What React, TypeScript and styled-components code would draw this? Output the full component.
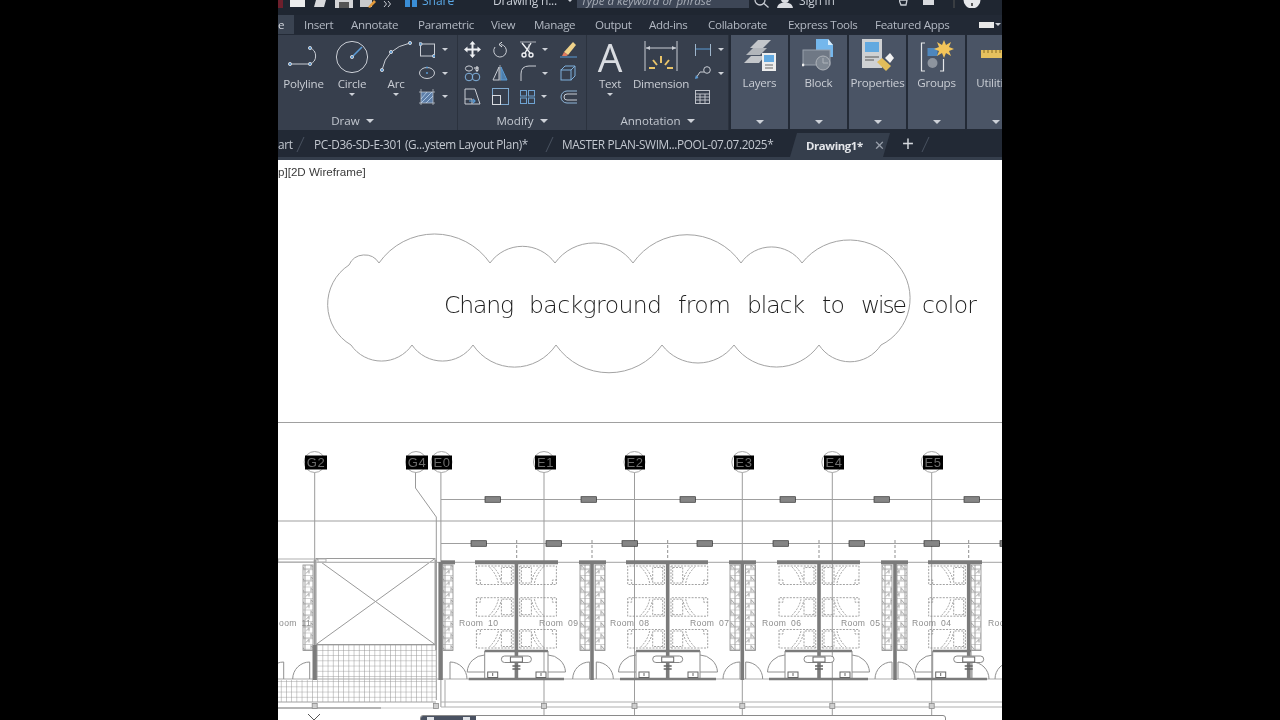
import React from "react";
import styled, { createGlobalStyle } from "styled-components";

const Global = createGlobalStyle`
  html, body { margin: 0; height: 100%; background: #000; overflow: hidden; }
  #root { height: 100%; }
`;

const Page = styled.div`
  height: 100%;
  display: flex;
  justify-content: center;
  background: #000;
  font-family: "Open Sans", "Liberation Sans", sans-serif;
`;
const Win = styled.div`
  width: 724px;
  height: 720px;
  flex: none;
  display: flex;
  flex-direction: column;
  overflow: hidden;
  filter: blur(0.35px);
`;
const TopBar = styled.div`
  height: 15px;
  flex: none;
  background: #1f2631;
  overflow: hidden;
`;
const TopRow = styled.div`
  height: 15px;
  margin-top: -7px;
  display: flex;
  align-items: center;
  font-size: 12px;
  color: #c9ced6;
  white-space: nowrap;
  & > * { flex: none; }
`;
const ShareText = styled.span`
  color: #5aa8e6;
  width: 71px;
`;
const DocName = styled.span`
  width: 74px;
  letter-spacing: -0.2px;
`;
const SignIn = styled.span`
  width: 34px;
  letter-spacing: -0.2px;
`;
const SearchBox = styled.div`
  width: 172px;
  height: 15px;
  padding-left: 4px;
  box-sizing: border-box;
  background: #3d4656;
  color: #a7adb7;
  font-style: italic;
  font-size: 11.5px;
  line-height: 15px;
`;
const Spacer = styled.span<{ $w: number }>`
  flex: none;
  width: ${(p) => p.$w}px;
`;
const TabRow = styled.div`
  height: 19px;
  flex: none;
  display: flex;
  align-items: center;
  background: #222935;
  font-size: 11.6px;
  letter-spacing: -0.32px;
  color: #b3b9c3;
  white-space: nowrap;
  & > * { flex: none; }
`;
const ActiveTab = styled.div`
  width: 16px;
  height: 19px;
  line-height: 19px;
  background: #3a4351;
  color: #d5d8de;
  margin-right: 10px;
`;
const Tab = styled.span<{ $w: number }>`
  width: ${(p) => p.$w}px;
`;
const WorkspaceButton = styled.span`
  margin-left: 3px;
  width: 15px;
  height: 6px;
  background: #e8e8e8;
`;
const Ribbon = styled.div`
  height: 96px;
  flex: none;
  display: flex;
  gap: 2px;
  padding-top: 1px;
  box-sizing: border-box;
  background: #232a36;
`;
const Panel = styled.div<{ $w: number }>`
  width: ${(p) => p.$w}px;
  flex: none;
  display: flex;
  flex-direction: column;
  background: #373f4d;
  border-right: 1px solid #2b323e;
  box-sizing: border-box;
  margin-right: -2px;
  &:nth-child(3) { margin-right: 0; }
`;
const PanelBody = styled.div`
  height: 76px;
  display: flex;
`;
const PanelTitle = styled.div<{ $shift?: number }>`
  flex: 1;
  display: flex;
  align-items: center;
  justify-content: center;
  gap: 6px;
  padding-right: ${(p) => p.$shift ?? 0}px;
  font-size: 11.6px;
  color: #c3c8d0;
`;
const TitleCaret = styled.span`
  flex: none;
  width: 0;
  height: 0;
  border-left: 4.5px solid transparent;
  border-right: 4.5px solid transparent;
  border-top: 4px solid #cdd1d8;
`;
const LargeTool = styled.div<{ $w: number }>`
  width: ${(p) => p.$w}px;
  flex: none;
  display: flex;
  flex-direction: column;
  align-items: center;
  padding-top: 4px;
  font-size: 11.6px;
  color: #c9cdd4;
  white-space: nowrap;
`;
const ToolIcon = styled.div`
  height: 35px;
  display: flex;
  align-items: center;
  justify-content: center;
`;
const ToolLabel = styled.div`
  line-height: 16px;
  margin-top: 1.5px;
  letter-spacing: -0.22px;
`;
const Caret = styled.span`
  flex: none;
  width: 0;
  height: 0;
  border-left: 3.5px solid transparent;
  border-right: 3.5px solid transparent;
  border-top: 3.5px solid #cdd1d8;
`;
const ToolCaret = styled(Caret)`
  margin-top: 1.5px;
`;
const SmallColumn = styled.div<{ $pad: number }>`
  display: flex;
  flex-direction: column;
  padding: 3px 0 0 ${(p) => p.$pad}px;
`;
const SmallTool = styled.div`
  height: 23.5px;
  display: flex;
  align-items: center;
  gap: 7px;
`;
const ModifyGrid = styled.div`
  display: grid;
  grid-template-columns: 28px 28px 40px 28px;
  grid-auto-rows: 23.5px;
  padding-top: 3px;
  align-items: center;
  justify-items: center;
`;
const LeftCell = styled.div`
  justify-self: start;
  padding-left: 6px;
  display: flex;
  align-items: center;
  gap: 6px;
`;
const BigA = styled.div`
  font-size: 39px;
  line-height: 35px;
  height: 35px;
  color: #d9dce1;
`;
const Collapsed = styled.div`
  width: 57px;
  flex: none;
  height: 94px;
  background: #4a5465;
  display: flex;
  flex-direction: column;
  align-items: center;
  padding-top: 3px;
  box-sizing: border-box;
  font-size: 11.6px;
  color: #c9cdd4;
  white-space: nowrap;
`;
const CollapsedCaret = styled(Caret)`
  margin-top: auto;
  margin-bottom: 5px;
  border-left-width: 4.5px;
  border-right-width: 4.5px;
  border-top-width: 4px;
`;
const DocTabs = styled.div`
  height: 30px;
  flex: none;
  display: flex;
  align-items: flex-start;
  background: #222935;
  border-bottom: 3px solid #353e4c;
  box-sizing: border-box;
  font-size: 11.8px;
  letter-spacing: -0.36px;
  color: #c3c8d0;
  white-space: nowrap;
`;
const DocTab = styled.div<{ $w: number }>`
  width: ${(p) => p.$w}px;
  flex: none;
  height: 26px;
  line-height: 29px;
`;
const Slash = styled.span<{ $left: number; $right: number }>`
  flex: none;
  width: 1px;
  height: 15px;
  margin: 7px ${(p) => p.$right}px 0 ${(p) => p.$left}px;
  background: #4a5361;
  transform: skewX(-25deg);
`;
const ActiveDoc = styled.div`
  width: 100px;
  height: 24px;
  margin: 3px 0 0 19px;
  flex: none;
  display: flex;
  align-items: center;
  gap: 11px;
  padding-left: 16px;
  box-sizing: border-box;
  background: #353e4c;
  clip-path: polygon(7px 0, 100% 0, 93px 100%, 0 100%);
  color: #e4e6ea;
  font-weight: 700;
  font-size: 11.4px;
  letter-spacing: -0.4px;
`;
const CloseMark = styled.span`
  color: #9aa1ac;
  font-weight: 400;
  font-size: 13px;
`;
const PlusMark = styled.span`
  flex: none;
  margin: 0 0 0 12px;
  font-size: 21px;
  line-height: 27px;
  color: #d5d8de;
`;
const Viewport = styled.div`
  position: relative;
  flex: 1;
  background: #fff;
  overflow: hidden;
`;
const ViewLabel = styled.div`
  position: absolute;
  left: 0;
  top: 4px;
  font-family: "Liberation Sans", sans-serif;
  font-size: 11.6px;
  line-height: 16px;
  color: #3a3a3a;
`;
const DrawingSvg = styled.svg`
  display: block;
  width: 724px;
  height: 560px;
`;
const CommandBar = styled.div`
  position: absolute;
  left: 142px;
  width: 526px;
  bottom: -2px;
  height: 7px;
  display: flex;
  border: 1px solid #8a8a8a;
  border-radius: 3px 3px 0 0;
  background: #fff;
  box-sizing: border-box;
  overflow: hidden;
`;
const CommandHead = styled.div`
  width: 55px;
  background: #4a5262;
  display: flex;
  justify-content: space-between;
  padding: 1px 6px;
  box-sizing: border-box;
`;
const CommandGlyph = styled.span`
  width: 7px;
  height: 3px;
  background: #e0e3e8;
`;

const GREY = "#c9cdd4";
const BLUE = "#5a9bd5";
const Dot = ({ x, y }: { x: number; y: number }) => <circle cx={x} cy={y} r={1.6} fill={BLUE} />;

const Polyline = () => (
  <svg width="40" height="34" fill="none" stroke={GREY} strokeWidth="1">
    <path d="M6 24H26M26 24A8.5 8.5 0 0 0 26 8" />
    <Dot x={6} y={24} /><Dot x={26} y={24} /><Dot x={26} y={8} />
  </svg>
);
const CircleIcon = () => (
  <svg width="34" height="34" fill="none" stroke={GREY} strokeWidth="1">
    <circle cx="17" cy="17" r="15.6" />
    <path d="M17 17L27 7" stroke={BLUE} strokeWidth="1.6" />
    <Dot x={17} y={17} />
  </svg>
);
const ArcIcon = () => (
  <svg width="32" height="34" fill="none" stroke={GREY} strokeWidth="1">
    <path d="M2 30Q6 8 30 3" />
    <Dot x={2} y={30} /><Dot x={11} y={12} /><Dot x={30} y={3} />
  </svg>
);
const RectIcon = () => (
  <svg width="16" height="16" fill="none" stroke={GREY} strokeWidth="1">
    <rect x="1.5" y="2" width="14" height="12" />
    <Dot x={1.5} y={2} /><Dot x={15} y={14} />
  </svg>
);
const EllipseIcon = () => (
  <svg width="16" height="16" fill="none" stroke={GREY} strokeWidth="1">
    <ellipse cx="8" cy="8" rx="7.5" ry="5.5" />
    <circle cx="8" cy="8" r="1" fill={BLUE} stroke="none" />
    <circle cx="8" cy="2.5" r="1" fill={BLUE} stroke="none" />
  </svg>
);
const HatchIcon = () => (
  <svg width="16" height="16" fill="none">
    <rect x="2" y="3" width="12" height="11" fill="#5d7ea8" />
    <path d="M2 10L8 3M2 14L13 3M7 14L14 7" stroke="#aac4e0" strokeWidth="1" />
    <path d="M2 0V16M14 0V16M0 3H16M0 14H16" stroke={GREY} strokeWidth=".7" />
  </svg>
);
const MoveIcon = () => (
  <svg width="17" height="17" fill="#eef0f3">
    <path d="M8.5 0L11.5 3.5H9.5V7.5H13.5V5.5L17 8.5L13.5 11.5V9.5H9.5V13.5H11.5L8.5 17L5.5 13.5H7.5V9.5H3.5V11.5L0 8.5L3.5 5.5V7.5H7.5V3.5H5.5Z" />
  </svg>
);
const RotateIcon = () => (
  <svg width="16" height="16" fill="none" stroke={GREY} strokeWidth="1">
    <path d="M9 2.5A6.3 6.3 0 1 1 3 5" />
    <path d="M10 0L7 2.5L10 5" stroke="#eef0f3" />
  </svg>
);
const TrimIcon = () => (
  <svg width="16" height="17" fill="none" stroke="#eef0f3" strokeWidth="1.4">
    <path d="M0 1H16" stroke={GREY} strokeWidth=".8" />
    <path d="M2 2L10 12M11 2L5 12" />
    <circle cx="4" cy="14" r="2" />
    <circle cx="11" cy="14" r="2" />
    <path d="M9 3V9" stroke={GREY} strokeWidth=".8" />
  </svg>
);
const EraseIcon = () => (
  <svg width="17" height="17" fill="none">
    <path d="M4 11L13 1L16 4L8 14Z" fill="#f0d38a" />
    <path d="M4 11L8 14L6.5 15H2Z" fill="#e07a5f" />
    <path d="M0 16H17" stroke={BLUE} strokeWidth="1" />
  </svg>
);
const CopyIcon = () => (
  <svg width="17" height="17" fill="none" stroke={GREY} strokeWidth="1">
    <ellipse cx="5" cy="3.5" rx="3.6" ry="2.6" />
    <circle cx="5" cy="12" r="3.8" stroke="#7fb0dc" />
    <circle cx="12" cy="12" r="3.8" stroke="#7fb0dc" />
    <path d="M10 3H15M13 1V6M11.5 4.5L13 6.5L14.5 4.5" stroke="#eef0f3" />
  </svg>
);
const MirrorIcon = () => (
  <svg width="16" height="16" fill="none" stroke={GREY} strokeWidth="1">
    <path d="M7 2L1 15H7Z" />
    <path d="M9 2L15 15H9Z" stroke={BLUE} fill="#4f7fab" />
    <path d="M8 0V16" strokeWidth=".7" />
  </svg>
);
const FilletIcon = () => (
  <svg width="16" height="16" fill="none" stroke={GREY} strokeWidth="1">
    <path d="M1 16V9Q1 1 9 1H16" />
  </svg>
);
const BoxIcon = () => (
  <svg width="16" height="16" fill="none" stroke="#7fb0dc" strokeWidth="1">
    <rect x="1" y="5" width="10" height="10" />
    <path d="M1 5L5 1H15V11L11 15M11 5L15 1" />
  </svg>
);
const StretchIcon = () => (
  <svg width="17" height="17" fill="none" stroke={GREY} strokeWidth="1">
    <path d="M1 1H11L16 16H1Z" />
    <path d="M1 11H8V16" />
    <path d="M5 13H11M9 11L11 13L9 15" stroke={BLUE} strokeWidth="1.2" />
  </svg>
);
const ScaleIcon = () => (
  <svg width="17" height="17" fill="none" strokeWidth="1">
    <rect x=".5" y=".5" width="16" height="16" stroke="#7fa9cf" />
    <rect x=".5" y="7.5" width="8" height="9" stroke="#d9dce1" />
  </svg>
);
const ArrayIcon = () => (
  <svg width="15" height="14" fill="none" stroke="#6fa3d2" strokeWidth="1">
    <rect x=".5" y=".5" width="6" height="5.5" />
    <rect x="8.5" y=".5" width="6" height="5.5" />
    <rect x=".5" y="8" width="6" height="5.5" />
    <rect x="8.5" y="8" width="6" height="5.5" />
  </svg>
);
const OffsetIcon = () => (
  <svg width="17" height="14" fill="none" stroke="#8fb6d9" strokeWidth="1">
    <path d="M17 1H7A6 6 0 0 0 7 13H17" />
    <path d="M17 4H7A3 3 0 0 0 7 10H17" stroke={GREY} />
  </svg>
);
const DimensionIcon = () => (
  <svg width="34" height="32" fill="none">
    <path d="M1 0V30M33 0V30" stroke={GREY} />
    <path d="M2 7H32" stroke={GREY} />
    <path d="M2 7L6 5V9ZM32 7L28 5V9Z" fill={GREY} />
    <path d="M17 15V22M9 19L13 24M25 19L21 24M5 27H11M23 27H29" stroke="#e9c46a" strokeWidth="2" />
  </svg>
);
const LinearIcon = () => (
  <svg width="16" height="16" fill="none" stroke="#9fb6cc" strokeWidth="1">
    <path d="M.5 2V14M15.5 2V14" />
    <path d="M1 7H15" stroke={BLUE} />
  </svg>
);
const LeaderIcon = () => (
  <svg width="16" height="14" fill="none" stroke={GREY} strokeWidth="1">
    <circle cx="12" cy="4" r="3.3" />
    <path d="M9 6L5 6L1 12" />
    <path d="M0 13L1 9L3.5 12Z" fill={BLUE} stroke="none" />
  </svg>
);
const TableIcon = () => (
  <svg width="15" height="14" fill="none" stroke={GREY} strokeWidth=".9">
    <rect x=".5" y=".5" width="14" height="13" />
    <path d="M.5 4H14.5M.5 7H14.5M.5 10H14.5M5 4V13.5M10 4V13.5" />
  </svg>
);
const LayersIcon = () => (
  <svg width="34" height="33" fill="none">
    <path d="M15 1H28L20 9H7Z" fill="#c3c6ca" />
    <path d="M3 16L10 9H24L17 16Z" fill="#b2b6bb" />
    <path d="M1 24L8 17H22L16 24Z" fill="#c3c6ca" />
    <rect x="19" y="14" width="14" height="18" fill="#eceded" />
    <rect x="21" y="16" width="10" height="7" fill="#62a9e0" />
    <path d="M22 26H30M22 29H30" stroke="#666" />
  </svg>
);
const BlockIcon = () => (
  <svg width="34" height="33" fill="none">
    <path d="M14 0H26L31 6V18H14Z" fill="#74b7ec" />
    <path d="M26 0L31 6H26Z" fill="#d7ecfb" />
    <rect x="1" y="11" width="27" height="15" fill="#6f7885" stroke="#98a0ab" />
    <circle cx="21" cy="24" r="7" fill="#7f8893" stroke="#aeb3ba" />
    <path d="M21 24V19M21 24H26" stroke="#aeb3ba" />
    <circle cx="1" cy="26" r="1.4" fill="#eee" />
  </svg>
);
const PropertiesIcon = () => (
  <svg width="34" height="33" fill="none">
    <rect x="1" y="0" width="20" height="29" fill="#cfd1d3" />
    <rect x="4" y="3" width="14" height="10" fill="#62a9e0" />
    <path d="M4 18H18M4 21H13" stroke="#555" />
    <path d="M16 23L25 32L30 27L21 19Z" fill="#e2bd5a" />
    <path d="M24 19L29 14L33 19L29 24Z" fill="#f2f2f2" />
  </svg>
);
const GroupsIcon = () => (
  <svg width="34" height="33" fill="none">
    <path d="M5 4H1.5V32H5M20 32H23.5V20" stroke="#e5e7ea" strokeWidth="1.2" />
    <rect x="7.5" y="9" width="10" height="8" fill="#4f87bd" />
    <circle cx="12.5" cy="24" r="5" fill="#8d949e" />
    <path d="M24 1L26 6L31 3L29 8L34 10L29 12L31 17L26 14L24 19L22 14L17 17L19 12L14 10L19 8L17 3L22 6Z" fill="#f4c55a" />
  </svg>
);
const UtilitiesIcon = () => (
  <svg width="36" height="33" fill="none">
    <rect x="3" y="11" width="33" height="8" fill="#e6c15e" />
    <path d="M6 11V14M10 11V14M14 11V14M18 11V14M22 11V14M26 11V14M30 11V14" stroke="#8a6f25" />
  </svg>
);
const QuickIcons = () => (
  <svg width="144" height="15" fill="none">
    <rect x="0" y="0" width="5" height="15" fill="#6d1f2c" />
    <rect x="12" y="0" width="15" height="14" fill="#eceded" />
    <path d="M36 14H46L50 0H40Z" fill="#d9dadc" />
    <rect x="57" y="0" width="18" height="15" fill="#d4d5d7" />
    <rect x="61" y="9" width="10" height="6" fill="#555" />
    <rect x="82" y="0" width="12" height="14" fill="#c9cacc" />
    <path d="M90 14L96 7L98 9L92 15Z" fill="#e59b3a" />
    <path d="M106 8L108.5 11L106 14M110 8L112.5 11L110 14" stroke="#c9cdd4" />
    <path d="M127 7H132V14H127ZM134 7H139V14H134Z" fill="#3a8ed6" />
  </svg>
);
const TopRightIcons = () => (
  <svg width="102" height="15" fill="none" stroke="#c9cdd4" strokeWidth="1.3">
    <path d="M0 7H8L7 12H2Z" />
    <rect x="24" y="7" width="11" height="5" fill="#d8dade" stroke="none" />
    <path d="M55 0V15" stroke="#555" strokeWidth="1" />
    <circle cx="73" cy="7" r="8.5" fill="#e6e7ea" stroke="none" />
    <path d="M73 10V13" stroke="#333" strokeWidth="1.6" />
  </svg>
);
const Magnifier = () => (
  <svg width="16" height="15" fill="none" stroke="#c9cdd4" strokeWidth="1.3">
    <circle cx="6" cy="7" r="5" />
    <path d="M10 10.5L14.5 14.5" />
  </svg>
);
const UserIcon = () => (
  <svg width="16" height="15" fill="#d9dbe0">
    <circle cx="8" cy="6" r="4" />
    <path d="M0 15C1 10 5 9.5 8 9.5C11 9.5 15 10 16 15Z" />
  </svg>
);

/* ---------- drawing data ---------- */
const LINE = "#9a9a9a";
const WALL = "#7b7b7b";

const cloudPath =
  "M379 263A67.6 67.6 0 0 1 490 263A40 40 0 0 1 555 263A48 48 0 0 1 633 263A65.7 65.7 0 0 1 741 263A37 37 0 0 1 802 263A60 60 0 0 1 898 265A52 52 0 0 1 881 345A37 37 0 0 1 819 345A52 52 0 0 1 734 345A45 45 0 0 1 662 345A64.5 64.5 0 0 1 556 345A50 50 0 0 1 473 345A37 37 0 0 1 412 345A37 37 0 0 1 351 345A47 47 0 0 1 349 265A17 17 0 0 1 379 263Z";

const words: [string, number, number][] = [
  ["Chang", 444, 70],
  ["background", 529, 133],
  ["from", 678, 53],
  ["black", 747, 58],
  ["to", 822, 23],
  ["wise", 861, 46],
  ["color", 922, 55],
];
const bubbles: [string, number, number, number][] = [
  ["G2", 314.7, 305, 22],
  ["G4", 416, 406, 22],
  ["E0", 441.5, 432, 20],
  ["E1", 544, 535, 21],
  ["E2", 634.5, 625, 20],
  ["E3", 742.3, 734, 20],
  ["E4", 832.3, 824, 20],
  ["E5", 931.7, 923, 20],
];
const upperMarks = [485, 581, 680, 780, 874, 964];
const lowerMarks = [471, 546, 622, 697, 773, 849, 924, 1000];
const ticks = [516.7, 592, 667.7, 819, 895, 968.7];
const wallSegs: [number, number][] = [
  [441, 455], [475, 558], [579, 606], [626, 708], [729, 756], [777, 860], [881, 908], [928, 982],
];
const partitions = [516.4, 592, 667.7, 742.3, 819, 895, 968.7];
const strips = [303, 443, 580, 595, 730, 745.5, 882, 897, 971];
const labels: [string, number][] = [
  ["oom 11", 279], ["Room 10", 459], ["Room 09", 539], ["Room 08", 610], ["Room 07", 690],
  ["Room 06", 762], ["Room 05", 841], ["Room 04", 912], ["Roo", 988],
];
const doors: [number, number][] = [
  [309.7, -1], [283.7, -1], [450, 1], [589.7, -1], [596.3, 1], [740, -1], [745.7, 1],
  [892, -1], [898, 1], [972, 1], [1012, -1],
];
const baths: [number, number, number, boolean][] = [
  [484.7, 548, 516.4, true],
  [636, 700, 667.7, true],
  [785, 852, 819, true],
  [932.7, 971, 968.7, false],
];
const squares = [314.7, 436, 544, 634.5, 742.3, 832.3, 931.7];
const bedRows: [number, boolean][] = [[566, false], [597.7, true], [629.5, true]];
const bedSets: [number, boolean, boolean][] = [
  [516.4, true, true], [667.7, true, true], [819, true, true], [968.7, true, false],
];

const Bed = ({ cx, y, mirror, flip }: { cx: number; y: number; mirror: boolean; flip: boolean }) => (
  <g
    transform={`translate(${cx} ${y}) scale(${mirror ? 1 : -1} 1) translate(${-cx} 0)`}
    fill="none"
    stroke="#8a8a8a"
    strokeWidth=".8"
    strokeDasharray="2 1.3"
  >
    <g transform={`translate(${cx} ${flip ? 18.5 : 0}) scale(1 ${flip ? -1 : 1})`}>
      <rect x={3.3} y={0} width={36.7} height={18.5} />
      <rect x={5} y={1.5} width={10} height={15.5} />
      <path d="M27 1Q20 8 18 17M23 1Q17 7 15.5 15" />
      <path d="M36 18V14H40" />
    </g>
  </g>
);

const Door = ({ x, dir }: { x: number; dir: number }) => (
  <path
    d={`M${x} 679V662A17 17 0 0 ${dir > 0 ? 1 : 0} ${x + dir * 17} 679`}
    fill="none"
    stroke="#909090"
    strokeWidth="1"
  />
);

const Bath = ({ l, r, c, both }: { l: number; r: number; c: number; both: boolean }) => (
  <g fill="none">
    <path d={`M${l} 651H${r}`} stroke={WALL} strokeWidth="2.4" />
    <path d={`M${l} 651V679M${r} 651V679`} stroke="#8c8c8c" strokeWidth="1" />
    <path d={`M${l - 16} 679H${r + 16}`} stroke={WALL} strokeWidth="2.6" />
    <path d={`M${l} 655A18 18 0 0 0 ${l - 17.5} 672H${l}`} stroke="#909090" />
    {both && <path d={`M${r} 655A18 18 0 0 1 ${r + 17.5} 672H${r}`} stroke="#909090" />}
    <rect x={l + 3} y={672} width={10} height={5.5} stroke="#666" fill="#fff" />
    <path d={`M${l + 8} 673V676`} stroke="#666" />
    {both && <rect x={r - 12} y={672} width={10} height={5.5} stroke="#666" fill="#fff" />}
    {both && <path d={`M${r - 7} 673V676`} stroke="#666" />}
    <rect x={c - 15} y={656} width={30} height={6.5} rx={3.2} stroke="#888" fill="#fff" />
    <rect x={c - 6} y={657} width={12} height={5} stroke="#666" />
    <path d={`M${c - 4} 666H${c + 4}M${c - 4} 669H${c + 4}`} stroke="#666" strokeWidth="1.5" />
  </g>
);

const Drawing = () => (
  <DrawingSvg viewBox="278 160 724 560">
    <defs>
      <pattern id="strip" width="10" height="11.5" patternUnits="userSpaceOnUse">
        <path d="M0 0H10M0 5.75H10M5 0V11.5M1 1.5L4 5M1 5L1 1.5M6 10L9 7M9 7V10" stroke="#8b8b8b" strokeWidth=".8" fill="none" />
      </pattern>
      <pattern id="tile" width="5.2" height="5.2" patternUnits="userSpaceOnUse">
        <path d="M0 0H5.2M0 0V5.2" stroke="#969696" strokeWidth="1" fill="none" />
      </pattern>
    </defs>

    <path d={cloudPath} fill="none" stroke="#a3a3a3" strokeWidth="1" />
    <text fontFamily="'DejaVu Sans', sans-serif" fontWeight="200" fontSize="23.5" fill="#1e1e1e" y="313">
      {words.map(([w, x, len]) => (
        <tspan key={w} x={x} textLength={len} lengthAdjust="spacing">{w}</tspan>
      ))}
    </text>

    <path d="M278 422.5H1002M278 521H1002" stroke="#a0a0a0" strokeWidth="1.2" fill="none" />

    {/* floor tiles and void */}
    <rect x="316" y="645" width="120" height="57" fill="url(#tile)" />
    <rect x="278" y="680" width="38" height="22" fill="url(#tile)" />
    <rect x="316" y="558.5" width="119" height="86" fill="#fff" stroke={LINE} />
    <path d="M316 558.5L435 644.5M435 558.5L316 644.5" stroke={LINE} fill="none" />
    <rect x="278" y="559" width="37" height="3" fill="none" stroke="#b0b0b0" />
    <rect x="318" y="559" width="8" height="3" fill="#fff" stroke="#b0b0b0" />

    {/* column lines */}
    <path d="M314.7 470V560M415.5 470V488L436.3 517V700" stroke={LINE} fill="none" />
    <path d="M440.9 470V707" stroke={LINE} fill="none" />
    {[544, 634.5, 742.3, 832.3, 931.7].map((x) => (
      <path key={x} d={`M${x} 470V720`} stroke="#9d9d9d" fill="none" />
    ))}
    {bubbles.map(([name, cx, x, w]) => (
      <g key={name}>
        <circle cx={cx} cy={462} r={10.5} fill="#fff" stroke="#a8a8a8" />
        <rect x={x} y={455.5} width={w} height={14} fill="#000" />
        <text x={x + w / 2} y={467} textAnchor="middle" fontFamily="'Liberation Sans', sans-serif" fontSize="13" letterSpacing=".5" fill="#6c6c6c">
          {name}
        </text>
      </g>
    ))}

    {/* dimension lines */}
    <path d="M441 499.5H1002M441 543.5H1002" stroke="#9f9f9f" fill="none" />
    {upperMarks.map((x) => (
      <rect key={x} x={x} y={496.7} width={15.5} height={5.6} fill="#858585" stroke="#333" strokeWidth=".7" />
    ))}
    {lowerMarks.map((x) => (
      <rect key={x} x={x} y={540.7} width={15.5} height={5.6} fill="#858585" stroke="#333" strokeWidth=".7" />
    ))}
    {ticks.map((x) => (
      <path key={x} d={`M${x} 540V560`} stroke="#8f8f8f" strokeDasharray="3 2" fill="none" />
    ))}

    {/* walls */}
    <path d="M278 562.3H1002" stroke="#b5b5b5" strokeWidth="1.2" fill="none" />
    {wallSegs.map(([a, b]) => (
      <path key={a} d={`M${a} 562.3H${b}`} stroke={WALL} strokeWidth="4" fill="none" />
    ))}
    <path d="M278 679H1002" stroke="#ababab" strokeWidth="1.2" fill="none" />
    {partitions.map((x) => (
      <path key={x} d={`M${x} 562V680`} stroke={WALL} strokeWidth="3.6" fill="none" />
    ))}
    <path d="M314.7 645V680" stroke={WALL} strokeWidth="4.4" fill="none" />
    <path d="M314.7 560V645" stroke="#999" strokeWidth="2" fill="none" />
    <path d="M440.6 562V680" stroke={WALL} strokeWidth="4.4" fill="none" />
    <path d="M436 560V650" stroke="#999" strokeWidth="1.6" fill="none" />

    {strips.map((x) => (
      <rect key={x} x={x} y={565} width={10} height={85.5} fill="url(#strip)" stroke="#8b8b8b" strokeWidth=".8" />
    ))}

    {bedSets.map(([cx, left, right]) =>
      bedRows.map(([y, flip]) => (
        <g key={`${cx}-${y}`}>
          {left && <Bed cx={cx} y={y} mirror={false} flip={flip} />}
          {right && <Bed cx={cx} y={y} mirror={true} flip={flip} />}
        </g>
      ))
    )}

    {labels.map(([t, x]) => (
      <text key={t} x={x} y={626} fontFamily="'Liberation Sans', sans-serif" fontSize="8.6" letterSpacing=".35" wordSpacing="2" fill="#8d8d8d">
        {t}
      </text>
    ))}

    {doors.map(([x, d]) => <Door key={x} x={x} dir={d} />)}
    {baths.map(([l, r, c, both]) => <Bath key={l} l={l} r={r} c={c} both={both} />)}

    {/* lower corridor */}
    <path d="M441 702H1002M441 707H1002M445 680V707" stroke="#b0b0b0" strokeWidth="1.1" fill="none" />
    <path d="M278 702H436" stroke="#a0a0a0" fill="none" />
    <path d="M278 708H381" stroke="#9b9b9b" strokeWidth="1.4" fill="none" />
    <path d="M381 708H436" stroke="#c8c8c8" strokeWidth="1.2" fill="none" />
    {squares.map((x) => (
      <rect key={x} x={x - 2.5} y={703.5} width={5} height={5} fill="#cfcfcf" stroke="#8a8a8a" strokeWidth=".8" />
    ))}
    <path d="M308 714L314 720L320 714" stroke="#555" fill="none" />
  </DrawingSvg>
);

export default function App() {
  return (
    <>
      <Global />
      <Page>
        <Win>
          <TopBar>
            <TopRow>
              <QuickIcons />
              <ShareText>Share</ShareText>
              <DocName>Drawing n...</DocName>
              <Caret />
              <Spacer $w={4} />
              <SearchBox>Type a keyword or phrase</SearchBox>
              <Spacer $w={5} />
              <Magnifier />
              <Spacer $w={7} />
              <UserIcon />
              <Spacer $w={6} />
              <SignIn>Sign in</SignIn>
              <Spacer $w={66} />
              <TopRightIcons />
            </TopRow>
          </TopBar>

          <TabRow>
            <ActiveTab>e</ActiveTab>
            <Tab $w={47}>Insert</Tab>
            <Tab $w={67}>Annotate</Tab>
            <Tab $w={73}>Parametric</Tab>
            <Tab $w={43}>View</Tab>
            <Tab $w={61}>Manage</Tab>
            <Tab $w={54}>Output</Tab>
            <Tab $w={59}>Add-ins</Tab>
            <Tab $w={80}>Collaborate</Tab>
            <Tab $w={87}>Express Tools</Tab>
            <Tab $w={101}>Featured Apps</Tab>
            <WorkspaceButton />
            <Spacer $w={1} />
            <Caret />
          </TabRow>

          <Ribbon>
            <Panel $w={180}>
              <PanelBody>
                <LargeTool $w={51}><ToolIcon><Polyline /></ToolIcon><ToolLabel>Polyline</ToolLabel></LargeTool>
                <LargeTool $w={46}><ToolIcon><CircleIcon /></ToolIcon><ToolLabel>Circle</ToolLabel><ToolCaret /></LargeTool>
                <LargeTool $w={42}><ToolIcon><ArcIcon /></ToolIcon><ToolLabel>Arc</ToolLabel><ToolCaret /></LargeTool>
                <SmallColumn $pad={2}>
                  <SmallTool><RectIcon /><Caret /></SmallTool>
                  <SmallTool><EllipseIcon /><Caret /></SmallTool>
                  <SmallTool><HatchIcon /><Caret /></SmallTool>
                </SmallColumn>
              </PanelBody>
              <PanelTitle $shift={30}>Draw <TitleCaret /></PanelTitle>
            </Panel>
            <Panel $w={129}>
              <PanelBody>
                <ModifyGrid>
                  <MoveIcon />
                  <RotateIcon />
                  <LeftCell><TrimIcon /><Caret /></LeftCell>
                  <EraseIcon />
                  <CopyIcon />
                  <MirrorIcon />
                  <LeftCell><FilletIcon /><Caret /></LeftCell>
                  <BoxIcon />
                  <StretchIcon />
                  <ScaleIcon />
                  <LeftCell><ArrayIcon /><Caret /></LeftCell>
                  <OffsetIcon />
                </ModifyGrid>
              </PanelBody>
              <PanelTitle>Modify <TitleCaret /></PanelTitle>
            </Panel>
            <Panel $w={142}>
              <PanelBody>
                <LargeTool $w={46}><BigA>A</BigA><ToolLabel>Text</ToolLabel><ToolCaret /></LargeTool>
                <LargeTool $w={56}><ToolIcon><DimensionIcon /></ToolIcon><ToolLabel>Dimension</ToolLabel></LargeTool>
                <SmallColumn $pad={6}>
                  <SmallTool><LinearIcon /><Caret /></SmallTool>
                  <SmallTool><LeaderIcon /><Caret /></SmallTool>
                  <SmallTool><TableIcon /></SmallTool>
                </SmallColumn>
              </PanelBody>
              <PanelTitle>Annotation <TitleCaret /></PanelTitle>
            </Panel>
            <Collapsed><ToolIcon><LayersIcon /></ToolIcon><ToolLabel>Layers</ToolLabel><CollapsedCaret /></Collapsed>
            <Collapsed><ToolIcon><BlockIcon /></ToolIcon><ToolLabel>Block</ToolLabel><CollapsedCaret /></Collapsed>
            <Collapsed><ToolIcon><PropertiesIcon /></ToolIcon><ToolLabel>Properties</ToolLabel><CollapsedCaret /></Collapsed>
            <Collapsed><ToolIcon><GroupsIcon /></ToolIcon><ToolLabel>Groups</ToolLabel><CollapsedCaret /></Collapsed>
            <Collapsed><ToolIcon><UtilitiesIcon /></ToolIcon><ToolLabel>Utilities</ToolLabel><CollapsedCaret /></Collapsed>
          </Ribbon>

          <DocTabs>
            <DocTab $w={17}>art</DocTab>
            <Slash $left={5} $right={13} />
            <DocTab $w={232}>PC-D36-SD-E-301 (G...ystem Layout Plan)*</DocTab>
            <Slash $left={3} $right={12} />
            <DocTab $w={209}>MASTER PLAN-SWIM...POOL-07.07.2025*</DocTab>
            <ActiveDoc>Drawing1* <CloseMark>✕</CloseMark></ActiveDoc>
            <PlusMark>+</PlusMark>
            <Slash $left={11} $right={0} />
          </DocTabs>

          <Viewport>
            <Drawing />
            <ViewLabel>p][2D Wireframe]</ViewLabel>
            <CommandBar>
              <CommandHead><CommandGlyph /><CommandGlyph /></CommandHead>
            </CommandBar>
          </Viewport>
        </Win>
      </Page>
    </>
  );
}
